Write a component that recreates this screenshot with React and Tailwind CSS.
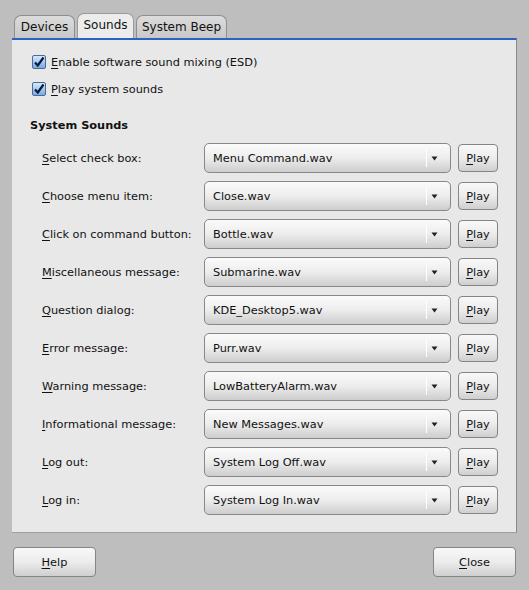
const rows = [
  ["S", "elect check box:", "Menu Command.wav"],
  ["C", "hoose menu item:", "Close.wav"],
  ["C", "lick on command button:", "Bottle.wav"],
  ["M", "iscellaneous message:", "Submarine.wav"],
  ["Q", "uestion dialog:", "KDE_Desktop5.wav"],
  ["E", "rror message:", "Purr.wav"],
  ["W", "arning message:", "LowBatteryAlarm.wav"],
  ["I", "nformational message:", "New Messages.wav"],
  ["L", "og out:", "System Log Off.wav"],
  ["L", "og in:", "System Log In.wav"],
];

function Check() {
  return (
    <span className="w-[14px] h-[14px] rounded-[2px] border border-[#4a6a94] bg-gradient-to-b from-[#d6e8fc] to-[#78aae6] flex items-center justify-center shrink-0">
      <svg width="12" height="12" viewBox="0 0 12 12">
        <path d="M2 6.5 L4.8 9.5 L10.5 1.5" fill="none" stroke="#0b1a3a" strokeWidth="2.2" strokeLinejoin="miter" />
      </svg>
    </span>
  );
}

function Btn({ u, rest, className }) {
  return (
    <button className={`rounded-[4px] border border-[#858585] bg-gradient-to-b from-[#f8f8f8] via-[#ececec] to-[#cfcfcf] text-[#111] flex items-center justify-center ${className}`}>
      <span><span className="underline underline-offset-2">{u}</span>{rest}</span>
    </button>
  );
}

export default function App() {
  return (
    <div
      className="w-[529px] h-[590px] bg-[#bebebe] text-[11.33px] text-[#111] pt-[13px] px-[12px] flex flex-col"
      style={{ fontFamily: '"DejaVu Sans", sans-serif' }}
    >
      <div className="flex items-end pl-[2px] gap-[2px] h-[25px] text-[12px]">
        <div className="h-[23px] w-[61px] rounded-t-[7px] border border-b-0 border-[#8e8e8e] bg-gradient-to-b from-[#dcdcdc] to-[#c8c8c8] flex items-center justify-center">Devices</div>
        <div className="h-[25px] w-[57px] rounded-t-[7px] border border-b-0 border-[#9a9a9a] bg-[#ececec] flex items-start justify-center pt-[2px]">Sounds</div>
        <div className="h-[23px] w-[91px] rounded-t-[7px] border border-b-0 border-[#8e8e8e] bg-gradient-to-b from-[#dcdcdc] to-[#c8c8c8] flex items-center justify-center">System Beep</div>
      </div>
      <div className="w-[505px] h-[495px] bg-[#e8e8e8] border-t-2 border-t-[#2a64c0] border-r border-r-[#8a8a8a] border-b border-b-[#a0a0a0] flex flex-col pl-[20px]">
        <div className="flex items-center gap-[5px] mt-[13px] h-[18px]">
          <Check />
          <span><span className="underline underline-offset-2">E</span>nable software sound mixing (ESD)</span>
        </div>
        <div className="flex items-center gap-[5px] mt-[9px] h-[18px]">
          <Check />
          <span><span className="underline underline-offset-2">P</span>lay system sounds</span>
        </div>
        <div className="font-bold mt-[19px] -ml-[2px] h-[16px] leading-[16px]">System Sounds</div>
        <div className="flex flex-col mt-[6px]">
          {rows.map(([u, rest, file], i) => (
            <div key={i} className="h-[38px] flex items-center">
              <div className="w-[172px] pl-[10px] whitespace-nowrap">
                <span className="underline underline-offset-2">{u}</span>{rest}
              </div>
              <div className="w-[247px] h-[30px] rounded-[5px] border border-[#888] bg-gradient-to-b from-[#fbfbfb] via-[#ededed] to-[#cdcdcd] flex items-center pl-[8px]">
                <span className="flex-1">{file}</span>
                <span className="w-px h-[18px] bg-[#8a8a8a] border-r border-r-white mr-[4px]"></span>
                <svg width="7" height="5" viewBox="0 0 7 5" className="mr-[12px]">
                  <path d="M0.5 0.5 H6.5 L3.5 4.5 Z" fill="#222" />
                </svg>
              </div>
              <Btn u="P" rest="lay" className="ml-[7px] w-[40px] h-[28px]" />
            </div>
          ))}
        </div>
      </div>
      <div className="flex justify-between mt-[14px] pl-[1px] pr-[1px]">
        <Btn u="H" rest="elp" className="w-[83px] h-[30px]" />
        <Btn u="C" rest="lose" className="w-[83px] h-[30px]" />
      </div>
    </div>
  );
}
